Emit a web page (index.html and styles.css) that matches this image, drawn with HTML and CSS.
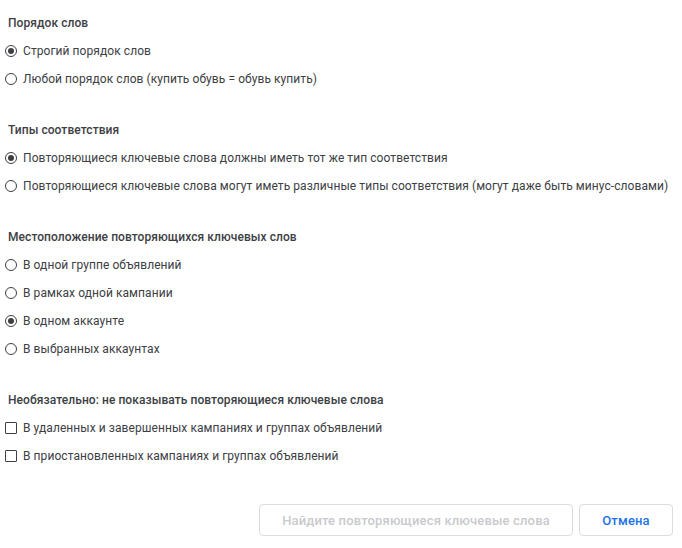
FILE: index.html
```html
<!DOCTYPE html>
<html lang="ru">
<head>
<meta charset="utf-8">
<link rel="stylesheet" href="styles.css">
</head>
<body>
<div class="page">
  <section class="group">
    <div class="heading">Порядок слов</div>
    <div class="row"><span class="radio checked"></span><span>Строгий порядок слов</span></div>
    <div class="row"><span class="radio"></span><span>Любой порядок слов (купить обувь = обувь купить)</span></div>
  </section>
  <section class="group">
    <div class="heading">Типы соответствия</div>
    <div class="row"><span class="radio checked"></span><span>Повторяющиеся ключевые слова должны иметь тот же тип соответствия</span></div>
    <div class="row"><span class="radio"></span><span>Повторяющиеся ключевые слова могут иметь различные типы соответствия (могут даже быть минус-словами)</span></div>
  </section>
  <section class="group">
    <div class="heading">Местоположение повторяющихся ключевых слов</div>
    <div class="row"><span class="radio"></span><span>В одной группе объявлений</span></div>
    <div class="row"><span class="radio"></span><span>В рамках одной кампании</span></div>
    <div class="row"><span class="radio checked"></span><span>В одном аккаунте</span></div>
    <div class="row"><span class="radio"></span><span>В выбранных аккаунтах</span></div>
  </section>
  <section class="group">
    <div class="heading">Необязательно: не показывать повторяющиеся ключевые слова</div>
    <div class="row"><span class="checkbox"></span><span>В удаленных и завершенных кампаниях и группах объявлений</span></div>
    <div class="row"><span class="checkbox"></span><span>В приостановленных кампаниях и группах объявлений</span></div>
  </section>
  <div class="actions">
    <button class="btn btn-primary" disabled>Найдите повторяющиеся ключевые слова</button>
    <button class="btn btn-cancel">Отмена</button>
  </div>
</div>
</body>
</html>
```

FILE: styles.css
```css
* { box-sizing: border-box; }
html, body { margin: 0; padding: 0; background: #fff; }
body {
  font-family: Roboto, "Liberation Sans", Arial, sans-serif;
  font-size: 12px;
  letter-spacing: 0.07px;
  color: #3c4043;
}
.page {
  width: 682px;
  padding: 15px 9px 0 8px;
}
.group { margin-bottom: 30px; }
.group:last-of-type { margin-bottom: 35px; }
.heading {
  height: 16px;
  line-height: 16px;
  font-weight: 500;
  color: #3c4043;
  margin-bottom: 6px;
}
.row {
  height: 28px;
  display: flex;
  align-items: center;
  gap: 6px;
  margin-left: -3px;
  line-height: 16px;
}
.group .row:last-child { height: 27px; }
.radio {
  width: 12px;
  height: 12px;
  border: 1.4px solid #3c4043;
  border-radius: 50%;
  display: flex;
  align-items: center;
  justify-content: center;
  flex: none;
}
.radio.checked::after {
  content: "";
  width: 6px;
  height: 6px;
  border-radius: 50%;
  background: #3c4043;
}
.checkbox {
  width: 12px;
  height: 12px;
  border: 1.4px solid #3c4043;
  border-radius: 1px;
  flex: none;
}
.actions {
  display: flex;
  justify-content: flex-end;
  gap: 6px;
}
.btn {
  height: 32px;
  border: 1px solid #dadce0;
  border-radius: 4px;
  background: #fff;
  font-family: Roboto, "Liberation Sans", Arial, sans-serif;
  font-size: 13px;
  font-weight: 500;
  letter-spacing: 0.15px;
  padding: 0;
}
.btn-primary { width: 314px; color: #c8cacd; }
.btn-cancel { width: 94px; color: #1a73e8; }
```
